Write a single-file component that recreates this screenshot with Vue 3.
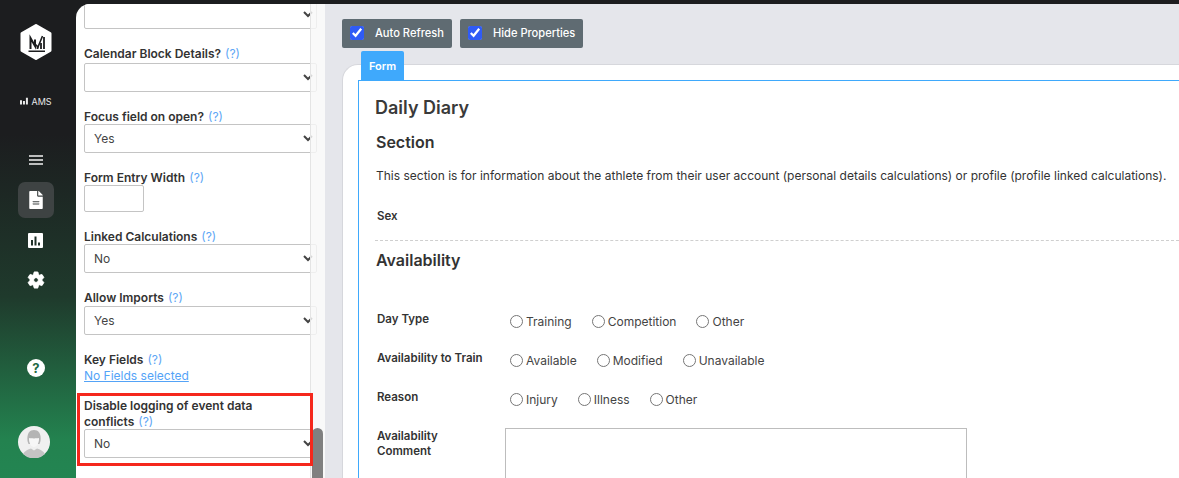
<template>
  <div class="app">
    <div class="top-bar"></div>
    <div class="shell">

      <!-- left nav -->
      <aside class="nav">
        <svg class="logo" viewBox="0 0 32 36">
          <path d="M16 1.500 L30 9.500 V26.500 L16 34.500 L2 26.500 V9.500 Z" fill="#fff" stroke="#fff" stroke-width="3" stroke-linejoin="round" />
          <path d="M10.500 25V14 L15 22 V15.500" fill="none" stroke="#1c1d1f" stroke-width="2" />
          <path d="M15 20l3 3 4.500-11" fill="none" stroke="#1c1d1f" stroke-width="1.600" />
          <path d="M17.500 25v-2.500M21 25v-6M24 25V13" fill="none" stroke="#1c1d1f" stroke-width="1.800" />
          <rect x="8.500" y="26.500" width="16.500" height="1.500" fill="#1c1d1f" />
        </svg>
        <div class="brand">
          <svg viewBox="0 0 10 10" class="brand-icon">
            <path d="M0 9.500V4h2.500v5.500zM3.700 9.500V5h2.500v4.500zM7.400 9.500V1h2.500v8.500z" fill="#e8e8e8" />
          </svg>
          <span>AMS</span>
        </div>
        <svg class="burger" viewBox="0 0 14 10">
          <path d="M0 1h14M0 5h14M0 9h14" stroke="#f2f2f2" stroke-width="1.400" />
        </svg>
        <div class="nav-item active">
          <svg viewBox="0 0 384 512" class="file-icon">
            <path fill="#fff" d="M224 136V0H24C10.700 0 0 10.700 0 24v464c0 13.300 10.700 24 24 24h336c13.300 0 24-10.700 24-24V160H248c-13.200 0-24-10.800-24-24zm64 236c0 6.600-5.400 12-12 12H108c-6.600 0-12-5.400-12-12v-8c0-6.600 5.400-12 12-12h168c6.600 0 12 5.400 12 12v8zm0-64c0 6.600-5.400 12-12 12H108c-6.600 0-12-5.400-12-12v-8c0-6.600 5.400-12 12-12h168c6.600 0 12 5.400 12 12v8zm96-186.100v6.100H256V0h6.100c6.400 0 12.500 2.500 17 7l97.900 98c4.500 4.500 7 10.600 7 16.900z" />
          </svg>
        </div>
        <div class="nav-item">
          <svg viewBox="0 0 15 15" class="chart-icon">
            <path fill="#fff" fill-rule="evenodd" d="M1 0h13a1 1 0 0 1 1 1v13a1 1 0 0 1-1 1H1a1 1 0 0 1-1-1V1a1 1 0 0 1 1-1zM3 7v5.500h2V7zM6.500 3.500v9h2v-9zM10 9.500v3h2v-3z" />
          </svg>
        </div>
        <div class="nav-item">
          <svg viewBox="0 0 24 24" class="gear-icon">
            <path fill="#fff" stroke="#fff" stroke-width="1.200" d="M19.140 12.940c.04-.3.06-.61.06-.94 0-.32-.02-.64-.07-.94l2.030-1.580a.49.49 0 0 0 .12-.61l-1.920-3.320a.488.488 0 0 0-.59-.22l-2.390.96c-.5-.38-1.030-.7-1.620-.94l-.36-2.540a.484.484 0 0 0-.48-.41h-3.840c-.24 0-.43.17-.47.41l-.36 2.540c-.59.24-1.130.57-1.620.94l-2.390-.96c-.22-.08-.47 0-.59.22L2.740 8.870c-.12.21-.08.47.12.61l2.030 1.580c-.05.3-.09.63-.09.94s.02.64.07.94l-2.030 1.580a.49.49 0 0 0-.12.61l1.920 3.320c.12.22.37.29.59.22l2.390-.96c.5.38 1.030.7 1.620.94l.36 2.540c.05.24.24.41.48.41h3.840c.24 0 .44-.17.47-.41l.36-2.540c.59-.24 1.130-.56 1.620-.94l2.390.96c.22.08.47 0 .59-.22l1.920-3.320c.12-.22.07-.47-.12-.61l-2.010-1.580zM12 14.800c-1.500 0-2.800-1.300-2.800-2.800s1.300-2.800 2.800-2.800 2.800 1.300 2.800 2.800-1.300 2.800-2.800 2.800z" />
          </svg>
        </div>
        <div class="help">?</div>
        <div class="avatar">
          <svg viewBox="0 0 32 32">
            <circle cx="16" cy="16" r="16" fill="#f0f0f0" />
            <path d="M9.500 15C8.500 7 12 4 16 4s7.500 3 6.500 11l-1 3h-11z" fill="#b4b4b4" />
            <path d="M11 12c2 .5 8 .5 10 0 .4 5-2.500 9-5 9s-5.400-4-5-9z" fill="#f7f7f7" />
            <path d="M5 28c1.500-3 5-4.500 8-5.500l3 2 3-2c3 1 6.500 2.500 8 5.500a16 16 0 0 1-22 0z" fill="#c4c4c4" />
          </svg>
        </div>
      </aside>

      <!-- properties panel -->
      <section class="panel">
        <div class="fields">
          <select class="cut-select"><option></option></select>

          <div v-for="f in fields" :key="f.label" class="field" :style="{ marginTop: f.gap + 'px' }">
            <label :style="{ marginBottom: f.after + 'px' }">{{ f.label }} <span class="hint">(?)</span></label>
            <input v-if="f.type === 'input'" class="small-input" type="text">
            <a v-else-if="f.type === 'link'" class="fields-link" href="#">No Fields selected</a>
            <select v-else><option>{{ f.value }}</option></select>
          </div>

          <div class="field highlighted">
            <label>
              <span class="line">Disable logging of event data</span>
              <span class="line">conflicts <span class="hint">(?)</span></span>
            </label>
            <select><option>No</option></select>
          </div>
        </div>
        <div class="track"><div class="thumb"></div></div>
      </section>

      <!-- form preview -->
      <main class="main">
        <div class="toolbar">
          <label class="tool-btn"><input type="checkbox" checked> Auto Refresh</label>
          <label class="tool-btn"><input type="checkbox" checked> Hide Properties</label>
        </div>
        <div class="tab">Form</div>
        <div class="outer-card">
          <div class="form-box">
            <h1>Daily Diary</h1>
            <h2>Section</h2>
            <p class="intro">This section is for information about the athlete from their user account (personal details calculations) or profile (profile linked calculations).</p>
            <div class="sex-row">Sex</div>
            <h2 class="availability">Availability</h2>

            <div v-for="r in radioRows" :key="r.name" class="radio-row">
              <div class="row-label">{{ r.name }}</div>
              <div class="options">
                <label v-for="o in r.options" :key="o"><input type="radio" :name="r.name">{{ o }}</label>
              </div>
            </div>

            <div class="comment-row">
              <div class="row-label">Availability Comment</div>
              <div class="comment-box"></div>
            </div>
          </div>
        </div>
      </main>
    </div>
  </div>
</template>

<script setup>
const fields = [
  { label: 'Calendar Block Details?', value: '', gap: 17, after: 1 },
  { label: 'Focus field on open?', value: 'Yes', gap: 17, after: -1 },
  { label: 'Form Entry Width', type: 'input', gap: 17, after: -1 },
  { label: 'Linked Calculations', value: 'No', gap: 17, after: -1 },
  { label: 'Allow Imports', value: 'Yes', gap: 17, after: 0 },
  { label: 'Key Fields', type: 'link', gap: 17, after: 0 }
]

const radioRows = [
  { name: 'Day Type', options: ['Training', 'Competition', 'Other'] },
  { name: 'Availability to Train', options: ['Available', 'Modified', 'Unavailable'] },
  { name: 'Reason', options: ['Injury', 'Illness', 'Other'] }
]
</script>

<style>
html, body {
  margin: 0;
  overflow: hidden;
}
</style>

<style scoped>
.app {
  width: 1179px;
  height: 478px;
  overflow: hidden;
  font-family: Inter, "Open Sans", sans-serif;
  color: #333;
  background: linear-gradient(180deg, #1c1d1f 0%, #1c1d1f 28%, #1f3a2c 62%, #23824f 92%, #238552 100%);
}
.top-bar {
  height: 4px;
  background: #1c1d1f;
}
.shell {
  display: flex;
  height: 474px;
}

/* nav */
.nav {
  width: 76px;
  flex-shrink: 0;
  display: flex;
  flex-direction: column;
  align-items: center;
  box-sizing: border-box;
  padding-right: 4px;
}
.logo {
  width: 32px;
  height: 36px;
  margin-top: 20px;
}
.brand {
  display: flex;
  align-items: center;
  gap: 3px;
  margin-top: 31px;
  font-size: 9px;
  color: #e8e8e8;
  height: 20px;
}
.brand-icon {
  width: 8px;
  height: 8px;
}
.burger {
  width: 14px;
  height: 10px;
  margin-top: 44px;
}
.nav-item {
  width: 36px;
  height: 36px;
  border-radius: 7px;
  display: flex;
  align-items: center;
  justify-content: center;
  margin-top: 4px;
}
.nav-item.active {
  background: #3e4343;
  margin-top: 17px;
}
.file-icon {
  width: 14px;
  height: 18px;
}
.chart-icon {
  width: 15px;
  height: 15px;
  margin-right: 1px;
}
.gear-icon {
  width: 20px;
  height: 20px;
}
.help {
  width: 18px;
  height: 18px;
  border-radius: 50%;
  background: #fff;
  color: #1f6a44;
  font-size: 13px;
  font-weight: 700;
  line-height: 18px;
  text-align: center;
  margin-top: 61px;
}
.avatar {
  width: 32px;
  height: 32px;
  margin-top: 49px;
  margin-left: -4px;
}
.avatar svg {
  display: block;
}

/* panel */
.panel {
  position: relative;
  width: 249px;
  flex-shrink: 0;
  background: #fff;
  border-top-left-radius: 14px;
  overflow: hidden;
}
.fields {
  padding-left: 8px;
  width: 233px;
}
select {
  display: block;
  width: 233px;
  height: 29px;
  box-sizing: border-box;
  border: 1px solid #c4c4c4;
  border-radius: 2px;
  background-color: #fff;
  padding-left: 5px;
  font-family: inherit;
  font-size: 12px;
  color: #444;
}
.cut-select {
  margin-top: -4px;
}
.field label {
  display: block;
  font-size: 12px;
  font-weight: 600;
  line-height: 16px;
  color: #333;
}
.hint {
  font-weight: 400;
  color: #5ea6f5;
  margin-left: 1px;
}
.small-input {
  display: block;
  width: 60px;
  height: 27px;
  box-sizing: border-box;
  border: 1px solid #c4c4c4;
  border-radius: 2px;
}
.fields-link {
  display: block;
  font-size: 12px;
  line-height: 15px;
  color: #54a3f7;
}
.highlighted {
  position: relative;
  z-index: 2;
  box-sizing: border-box;
  overflow: hidden;
  outline: 3px solid #f5281c;
  margin: 13px 0 0 -4px;
  padding: 2px 0 5px 4px;
  width: 230px;
}
.highlighted label {
  margin-bottom: -1px;
}
.line {
  display: block;
}
.track {
  position: absolute;
  top: 0;
  bottom: 0;
  right: 0;
  width: 15px;
  background: rgba(248, 248, 248, 0.82);
  border-left: 1px solid #e4e4e4;
  box-sizing: border-box;
}
.thumb {
  position: absolute;
  left: 1px;
  top: 424px;
  width: 11px;
  height: 60px;
  border-radius: 6px;
  background: #808080;
}

/* main area */
.main {
  flex: 1;
  min-width: 0;
  background: #e5e6eb;
  padding: 15px 0 0 17px;
  box-sizing: border-box;
  overflow: hidden;
}
.toolbar {
  display: flex;
  gap: 8px;
}
.tool-btn {
  display: flex;
  align-items: center;
  height: 29px;
  padding: 0 8px 1px;
  box-sizing: border-box;
  gap: 11px;
  background: #5f6b72;
  border-radius: 2px;
  color: #fff;
  font-size: 11.1px;
  font-weight: 500;
  min-width: 110px;
}
.tool-btn input {
  width: 14px;
  height: 14px;
  margin: 0;
  accent-color: #2f5bf6;
}
.tab {
  width: 43px;
  height: 29px;
  margin: 3px 0 0 19px;
  background: #3fa9fc;
  color: #fff;
  font-size: 11px;
  font-weight: 600;
  text-align: center;
  line-height: 30px;
  border-radius: 2px 2px 0 0;
  position: relative;
  z-index: 1;
}
.outer-card {
  margin-top: -16px;
  background: #fff;
  border: 1px solid #d6d7dc;
  border-right: 0;
  border-bottom: 0;
  border-top-left-radius: 16px;
  padding: 15px 0 0 15px;
  height: 420px;
  box-sizing: border-box;
}
.form-box {
  border: 1px solid #3fa9fc;
  border-right: 0;
  border-bottom: 0;
  padding: 15px 0 0 16px;
  height: 400px;
}
h1 {
  margin: 0;
  font-size: 18px;
  font-weight: 600;
  line-height: 24px;
  color: #3a3a3a;
}
h2 {
  margin: 11px 0 0 1px;
  font-size: 16px;
  font-weight: 600;
  line-height: 22px;
  color: #333;
}
.intro {
  margin: 14px 0 0 1px;
  font-size: 12px;
  line-height: 18px;
  white-space: nowrap;
  color: #333;
}
.sex-row {
  margin: 23px 0 0 0;
  padding: 0 0 16px 2px;
  font-size: 11.5px;
  font-weight: 600;
  line-height: 16px;
  border-bottom: 1px dashed #cfcfcf;
}
.availability {
  margin-top: 8px;
}
.radio-row {
  display: flex;
  align-items: flex-start;
  margin-left: 2px;
  height: 39px;
}
.availability + .radio-row {
  margin-top: 41px;
}
.row-label {
  width: 133px;
  flex-shrink: 0;
  font-size: 11.5px;
  font-weight: 600;
  line-height: 15px;
  color: #333;
}
.options {
  display: flex;
  gap: 20px;
  font-size: 12px;
  line-height: 15px;
  color: #444;
  padding-top: 2px;
}
.options label {
  display: flex;
  align-items: center;
  gap: 3px;
}
.options input {
  width: 13px;
  height: 13px;
  margin: 0;
}
.comment-row {
  display: flex;
  align-items: flex-start;
  margin: -1px 0 0 2px;
}
.comment-row .row-label {
  width: 128px;
  padding: 1px 48px 0 0;
  box-sizing: border-box;
}
.comment-box {
  width: 460px;
  height: 120px;
  border: 1px solid #bdbdbd;
}
</style>
